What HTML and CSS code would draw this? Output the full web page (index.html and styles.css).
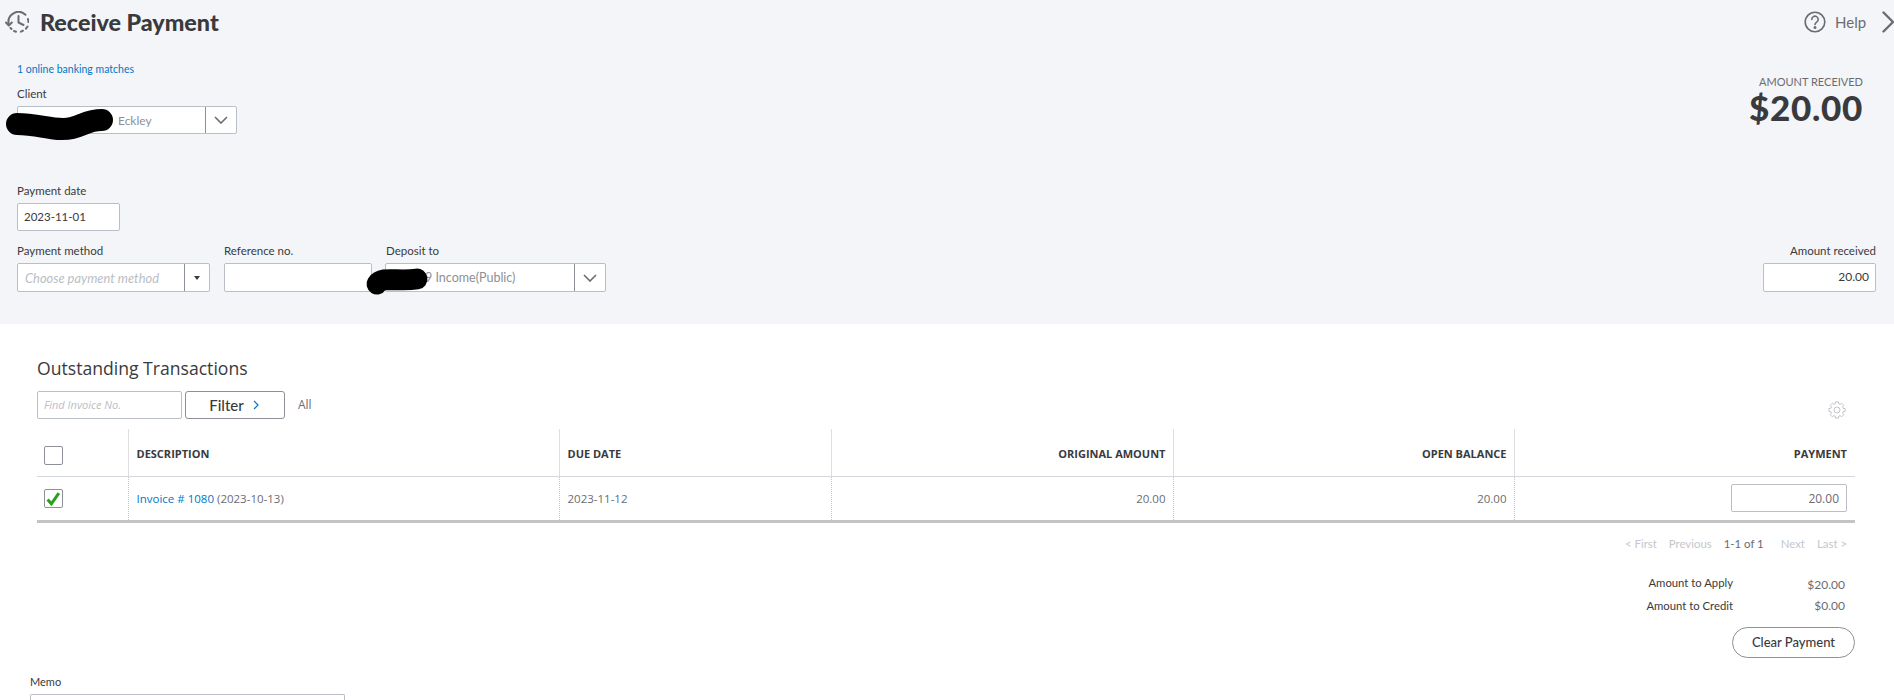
FILE: index.html
```html
<!DOCTYPE html>
<html lang="en">
<head>
<meta charset="utf-8">
<title>Receive Payment</title>
<link rel="stylesheet" href="styles.css">
</head>
<body>
<section class="top">
  <header class="titlebar">
    <svg class="history" viewBox="0 0 24 22" fill="none" stroke="#6b6c72" stroke-width="2" stroke-linecap="round" stroke-linejoin="round">
      <path d="M3.6 12.5A10 10 0 0 1 20.5 3.8"/>
      <path d="M23 8l.5 3"/>
      <path d="M22.5 15.5l-1.5 2.1M18 19.7l-2 1M11 20.7l-2-.7M6.5 18l-1-1"/>
      <path d="M1 11.5l2.8 3 3-3"/>
      <path d="M13.5 5v6.5l5 2.5"/>
    </svg>
    <h1 class="title">Receive Payment</h1>
    <div class="help">
      <svg class="help-icon" viewBox="0 0 22 22" fill="none" stroke="#6b6c72" stroke-width="1.6">
        <circle cx="11" cy="11" r="9.8"/>
        <path d="M7.8 8.4a3.2 3.2 0 1 1 4.9 2.7c-1.1.7-1.7 1.3-1.7 2.5" stroke-linecap="round"/>
        <circle cx="11" cy="16.4" r=".7" fill="#6b6c72"/>
      </svg>
      <span class="help-text">Help</span>
      <svg class="drawer-chevron" viewBox="0 0 12 22" fill="none" stroke="#6b6c72" stroke-width="2.4" stroke-linecap="round" stroke-linejoin="round">
        <path d="M1.5 1.5L11 11 1.5 20.5"/>
      </svg>
    </div>
  </header>

  <div class="top-grid">
    <div class="left">
      <a class="match-link">1 online banking matches</a>
      <label class="label client-label">Client</label>
      <div class="combo client-combo">
        <span class="combo-value">Eckley</span>
        <span class="combo-btn combo-btn-client">
          <svg class="chev" viewBox="0 0 14 8" fill="none" stroke="#6b6c72" stroke-width="1.6"><path d="M1 1l6 6 6-6"/></svg>
        </span>
      </div>
      <label class="label date-label">Payment date</label>
      <div class="field date-field">2023-11-01</div>
      <div class="payment-row">
        <div class="col">
          <label class="label">Payment method</label>
          <div class="combo method-combo">
            <span class="combo-value placeholder">Choose payment method</span>
            <span class="combo-btn combo-btn-method"><span class="caret"></span></span>
          </div>
        </div>
        <div class="col">
          <label class="label">Reference no.</label>
          <div class="field ref-field"></div>
        </div>
        <div class="col">
          <label class="label">Deposit to</label>
          <div class="combo deposit-combo">
            <span class="combo-value deposit-value">9 Income(Public)</span>
            <span class="combo-btn combo-btn-deposit">
              <svg class="chev" viewBox="0 0 14 8" fill="none" stroke="#6b6c72" stroke-width="1.6"><path d="M1 1l6 6 6-6"/></svg>
            </span>
          </div>
        </div>
      </div>
    </div>
    <div class="right">
      <div class="total-caption">AMOUNT RECEIVED</div>
      <div class="total">$20.00</div>
      <label class="label amount-label">Amount received</label>
      <div class="field amount-field">20.00</div>
    </div>
  </div>
</section>

<main class="content">
  <h2 class="section-title">Outstanding Transactions</h2>
  <div class="toolbar">
    <div class="field find-field">Find Invoice No.</div>
    <button class="filter-btn">Filter <svg class="filter-chev" viewBox="0 0 6 10" fill="none" stroke="#0077c5" stroke-width="1.2"><path d="M1 1l4 4-4 4"/></svg></button>
    <span class="all">All</span>
    <svg class="gear" viewBox="-12 -12 24 24" fill="none" stroke="#b4b7bd" stroke-width="1.1" stroke-linejoin="round">
      <polygon points="8.17,-2.34 10.83,-1.91 10.83,1.91 8.17,2.34 7.43,4.12 9.01,6.31 6.31,9.01 4.12,7.43 2.34,8.17 1.91,10.83 -1.91,10.83 -2.34,8.17 -4.12,7.43 -6.31,9.01 -9.01,6.31 -7.43,4.12 -8.17,2.34 -10.83,1.91 -10.83,-1.91 -8.17,-2.34 -7.43,-4.12 -9.01,-6.31 -6.31,-9.01 -4.12,-7.43 -2.34,-8.17 -1.91,-10.83 1.91,-10.83 2.34,-8.17 4.12,-7.43 6.31,-9.01 9.01,-6.31 7.43,-4.12"/>
      <circle r="4"/>
    </svg>
  </div>

  <table class="grid">
    <colgroup>
      <col class="c-check"><col class="c-desc"><col class="c-due"><col class="c-orig"><col class="c-open"><col class="c-pay">
    </colgroup>
    <thead>
      <tr>
        <th class="check-cell"><span class="box"></span></th>
        <th>DESCRIPTION</th>
        <th>DUE DATE</th>
        <th class="num">ORIGINAL AMOUNT</th>
        <th class="num">OPEN BALANCE</th>
        <th class="num">PAYMENT</th>
      </tr>
    </thead>
    <tbody>
      <tr>
        <td class="check-cell">
          <span class="box">
            <svg class="tick" viewBox="0 0 14 13" fill="none" stroke="#2ca01c" stroke-width="2.8"><path d="M1.5 7l3.5 4 7-10"/></svg>
          </span>
        </td>
        <td><a class="invoice-link">Invoice # 1080</a> (2023-10-13)</td>
        <td>2023-11-12</td>
        <td class="num">20.00</td>
        <td class="num">20.00</td>
        <td class="num"><div class="field pay-field">20.00</div></td>
      </tr>
    </tbody>
  </table>

  <nav class="pager">
    <span>&lt; First</span>
    <span>Previous</span>
    <span class="pager-current">1-1 of 1</span>
    <span>Next</span>
    <span>Last &gt;</span>
  </nav>

  <div class="summary">
    <div class="summary-row"><span class="summary-label">Amount to Apply</span><span class="summary-value summary-value-1">$20.00</span></div>
    <div class="summary-row summary-row-2"><span class="summary-label">Amount to Credit</span><span class="summary-value">$0.00</span></div>
    <button class="clear-btn">Clear Payment</button>
  </div>

  <div class="memo">
    <label class="label memo-label">Memo</label>
    <div class="memo-box"></div>
  </div>
</main>

<svg class="scribble" viewBox="0 0 1894 700" fill="none" stroke="#000" stroke-linecap="round" stroke-linejoin="round">
  <path stroke-width="22" d="M17 124C40 124 56 132 72 128C84 125 88 120 102 120"/>
  <path stroke-width="21" d="M377 284C382 276 398 282 417 279"/>
</svg>
</body>
</html>
```
FILE: styles.css
```css
* { box-sizing: border-box; }
html, body { margin: 0; height: 700px; overflow: hidden; background: #fff; }
body { position: relative; font-family: "Lato", "Open Sans", sans-serif; color: #393a3d; font-size: 12px; }

.top { height: 324px; background: #f4f5f8; }
.titlebar { display: flex; align-items: center; height: 44px; padding-left: 5px; }
.history { width: 24px; height: 22px; flex: none; }
.title { margin: 0 0 0 11px; font-size: 23.3px; font-weight: 900; color: #393a3d; line-height: 44px; }
.help { margin-left: auto; display: flex; align-items: center; }
.help-icon { width: 22px; height: 22px; }
.help-text { margin-left: 9px; font-size: 15px; color: #6b6c72; width: 47px; }
.drawer-chevron { width: 12px; height: 22px; }

.top-grid { display: flex; justify-content: space-between; padding: 17px 18px 0 17px; }
.match-link { display: block; font-size: 10.5px; line-height: 16px; color: #0077c5; }
.label { display: block; padding-top: 1px; font-size: 11.5px; line-height: 16px; color: #393a3d; }
.client-label { margin-top: 8px; height: 21px; }
.combo { display: flex; height: 28px; background: #fff; border: 1px solid #babec5; border-radius: 2px; }
.client-combo { width: 220px; }
.combo-value { flex: 1; font-size: 12px; line-height: 28px; padding-left: 100px; color: #8d9096; white-space: nowrap; }
.combo-btn { flex: none; display: flex; align-items: center; justify-content: center; border-left: 1px solid #8d9096; }
.combo-btn-client { width: 31px; }
.combo-btn-method { width: 25px; }
.combo-btn-deposit { width: 31px; }
.chev { width: 14px; height: 8px; }
.caret { width: 0; height: 0; border-left: 3.5px solid transparent; border-right: 3.5px solid transparent; border-top: 4px solid #393a3d; }

.date-label { margin-top: 48px; height: 21px; }
.field { height: 28px; background: #fff; border: 1px solid #babec5; border-radius: 2px; line-height: 26px; padding: 0 6px; font-size: 12px; color: #393a3d; }
.date-field { width: 103px; font-size: 11.5px; }
.payment-row { display: flex; gap: 14px; margin-top: 11px; }
.payment-row .label { height: 21px; }
.method-combo { width: 193px; height: 29px; }
.placeholder { padding-left: 7px; font-style: italic; color: #babec5; font-size: 12.9px; }
.ref-field { width: 148px; height: 29px; }
.deposit-combo { width: 221px; height: 29px; margin-left: -1px; }
.deposit-value { padding-left: 39px; font-size: 12.5px; }

.right { display: flex; flex-direction: column; align-items: flex-end; }
.total-caption { margin: 13px 13px 0 0; font-size: 11px; line-height: 16px; color: #6b6c72; }
.total { margin: -1px 13px 0 0; font-size: 35px; font-weight: 900; line-height: 36px; color: #393a3d; letter-spacing: .7px; }
.amount-label { margin-top: 117px; height: 21px; }
.amount-field { width: 113px; height: 29px; text-align: right; }

.content { padding: 0 39px 0 37px; }
.section-title { margin: 31px 0 0; font: 400 17.6px/26px "Open Sans", sans-serif; color: #393a3d; }
.toolbar { position: relative; display: flex; align-items: center; margin-top: 10px; height: 28px; }
.find-field { width: 145px; font-family: "Open Sans", sans-serif; font-style: italic; font-size: 11px; color: #babec5; }
.filter-btn { display: flex; align-items: center; justify-content: center; gap: 9px; width: 100px; height: 28px; margin-left: 3px; padding: 0 2px 0 0; background: #fff; border: 1px solid #8d9096; border-radius: 3px; font: 500 15px "Lato", sans-serif; color: #393a3d; }
.filter-chev { width: 6px; height: 10px; }
.all { margin: -2px 0 0 13px; font: 400 12px "Open Sans", sans-serif; color: #6b6c72; }
.gear { width: 18px; height: 18px; margin: 10px 9px 0 auto; flex: none; }

.grid { width: 1818px; margin-top: 10px; border-collapse: collapse; table-layout: fixed; font-family: "Open Sans", sans-serif; }
.c-check { width: 91px; } .c-desc { width: 431px; } .c-due { width: 272px; } .c-orig { width: 342px; } .c-open { width: 341px; } .c-pay { width: 341px; }
.grid th { height: 47px; padding: 2px 7px 0 8px; text-align: left; font-size: 11px; font-weight: 700; color: #393a3d; border-left: 1px solid #dcdee2; border-bottom: 1px solid #d4d7dc; }
.grid td { height: 45px; padding: 0 7px 0 8px; font-size: 11.5px; color: #6b6c72; border-left: 1px dotted #c4c6ca; border-bottom: 3px solid #c4c4c4; }
.grid th.check-cell, .grid td.check-cell { border-left: 0; padding: 0 0 0 7px; }
.grid th.check-cell { padding-top: 6px; }
.grid td.check-cell { padding-top: 1px; }
.grid th.num, .grid td.num { text-align: right; }
.grid th:last-child, .grid td:last-child { padding-right: 8px; }
.box { display: block; width: 19px; height: 19px; background: #fff; border: 1px solid #8d9096; border-radius: 2px; position: relative; }
.grid td .box { display: flex; align-items: center; justify-content: center; }
.tick { width: 15px; height: 14px; }
.invoice-link { color: #0077c5; }
.pay-field { width: 116px; margin-left: auto; text-align: right; font-size: 12px; line-height: 27px; padding: 0 7px; color: #6b6c72; }

.pager { display: flex; justify-content: flex-end; gap: 12px; margin-top: 13px; padding-right: 8px; font-size: 11.4px; line-height: 16px; color: #c4c7cc; }
.pager-current { color: #6b6c72; margin: 0 5px 0 0; }

.summary { display: flex; flex-direction: column; align-items: flex-end; margin-top: 21px; }
.summary-row { display: flex; align-items: center; height: 20px; margin-right: 10px; }
.summary-row-2 { margin-top: 3px; }
.summary-label { width: 120px; text-align: right; font-size: 11.3px; color: #393a3d; }
.summary-value { width: 112px; text-align: right; font-size: 12px; color: #6b6c72; }
.summary-value-1 { padding-top: 4px; }
.clear-btn { width: 123px; height: 31px; margin-top: 11px; background: #fff; border: 1px solid #8d9096; border-radius: 16px; font: 500 13px "Lato", sans-serif; color: #393a3d; }

.memo { margin: 16px 0 0 -7px; }
.memo-label { padding-top: 0; font-size: 11px; height: 20px; }
.memo-box { width: 315px; height: 6px; border: 1px solid #babec5; border-bottom: 0; border-radius: 2px 2px 0 0; background: #fff; }

.scribble { position: absolute; left: 0; top: 0; width: 1894px; height: 700px; pointer-events: none; }
```
